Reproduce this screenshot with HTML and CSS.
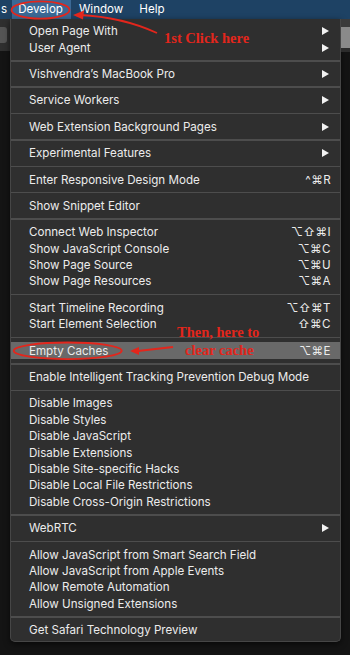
FILE: index.html
```html
<!DOCTYPE html>
<html lang="en">
<head>
  <meta charset="UTF-8">
  <meta name="viewport" content="width=device-width, initial-scale=1.0">
  <title>Develop menu</title>
  <link rel="stylesheet" href="styles.css">
</head>
<body>
  <header class="menubar">
    <span class="mb-item cut">s</span>
    <span class="mb-item active">Develop</span>
    <span class="mb-item">Window</span>
    <span class="mb-item">Help</span>
  </header>

  <div class="screen">
    <div class="side left">
      <div class="toolbar"><div class="tool-btn"></div></div>
    </div>

    <div class="menu">
      <div class="item"><span>Open Page With</span><i class="arrow"></i></div>
      <div class="item"><span>User Agent</span><i class="arrow"></i></div>
      <div class="sep"></div>
      <div class="item"><span>Vishvendra’s MacBook Pro</span><i class="arrow"></i></div>
      <div class="sep"></div>
      <div class="item"><span>Service Workers</span><i class="arrow"></i></div>
      <div class="sep"></div>
      <div class="item"><span>Web Extension Background Pages</span><i class="arrow"></i></div>
      <div class="sep"></div>
      <div class="item"><span>Experimental Features</span><i class="arrow"></i></div>
      <div class="sep"></div>
      <div class="item"><span>Enter Responsive Design Mode</span><span class="key">^⌘R</span></div>
      <div class="sep"></div>
      <div class="item"><span>Show Snippet Editor</span></div>
      <div class="sep"></div>
      <div class="item"><span>Connect Web Inspector</span><span class="key">⌥⇧⌘I</span></div>
      <div class="item"><span>Show JavaScript Console</span><span class="key">⌥⌘C</span></div>
      <div class="item"><span>Show Page Source</span><span class="key">⌥⌘U</span></div>
      <div class="item"><span>Show Page Resources</span><span class="key">⌥⌘A</span></div>
      <div class="sep"></div>
      <div class="item"><span>Start Timeline Recording</span><span class="key">⌥⇧⌘T</span></div>
      <div class="item"><span>Start Element Selection</span><span class="key">⇧⌘C</span></div>
      <div class="sep"></div>
      <div class="item selected"><span>Empty Caches</span><span class="key">⌥⌘E</span></div>
      <div class="sep"></div>
      <div class="item"><span>Enable Intelligent Tracking Prevention Debug Mode</span></div>
      <div class="sep"></div>
      <div class="item"><span>Disable Images</span></div>
      <div class="item"><span>Disable Styles</span></div>
      <div class="item"><span>Disable JavaScript</span></div>
      <div class="item"><span>Disable Extensions</span></div>
      <div class="item"><span>Disable Site-specific Hacks</span></div>
      <div class="item"><span>Disable Local File Restrictions</span></div>
      <div class="item"><span>Disable Cross-Origin Restrictions</span></div>
      <div class="sep"></div>
      <div class="item"><span>WebRTC</span><i class="arrow"></i></div>
      <div class="sep"></div>
      <div class="item"><span>Allow JavaScript from Smart Search Field</span></div>
      <div class="item"><span>Allow JavaScript from Apple Events</span></div>
      <div class="item"><span>Allow Remote Automation</span></div>
      <div class="item"><span>Allow Unsigned Extensions</span></div>
      <div class="sep"></div>
      <div class="item"><span>Get Safari Technology Preview</span></div>
    </div>

    <div class="side right">
      <div class="scroll-top"></div>
      <div class="scroll-thumb"></div>
      <div class="scroll-end"></div>
    </div>
  </div>

  <!-- hand drawn notes on top of the screenshot -->
  <svg class="notes" width="350" height="655" viewBox="0 0 350 655">
    <ellipse cx="40.5" cy="10" rx="29" ry="8.6" />
    <path d="M157 33 Q122 17 80 15" />
    <polygon class="head" points="73,15 84,10.5 83,19.5" />
    <text x="164" y="43">1st Click here</text>

    <ellipse cx="67.7" cy="350.8" rx="54" ry="8.3" />
    <path d="M173 347 Q156 349 138 351" />
    <polygon class="head" points="130,351 139,347 139,355" />
    <text x="177" y="337">Then, here to</text>
    <text x="185" y="355">clear cache</text>
  </svg>
</body>
</html>
```

FILE: styles.css
```css
body {
  margin: 0;
  width: 350px;
  height: 655px;
  overflow: hidden;
  position: relative;
  background-color: #141414;
  font-family: Inter, "Noto Sans", "DejaVu Sans", sans-serif;
  font-size: 11.6px;
  color: #ececec;
}
.menubar {
  height: 19px;
  display: flex;
  align-items: stretch;
  background-color: #1e4264;
  color: #fff;
  line-height: 19px;
  white-space: nowrap;
}
.mb-item {
  padding: 0 8px;
}
.mb-item.cut {
  padding: 0 0 0 1px;
  margin-right: 5px;
}
.mb-item.active {
  padding: 0 8px 0 6px;
  background-color: #3b6995;
}
.screen {
  display: flex;
  align-items: flex-start;
}
.side {
  align-self: stretch;
  display: flex;
  flex-direction: column;
}
.side.left {
  width: 10px;
}
.toolbar {
  height: 32px;
  background-color: #2f2f2f;
  padding-top: 8px;
  box-sizing: border-box;
}
.tool-btn {
  width: 7px;
  height: 16px;
  border-radius: 0 3px 3px 0;
  background-color: #555;
}
.side.right {
  width: 9px;
}
.scroll-top {
  height: 8px;
  background-color: #3b3b3b;
}
.scroll-thumb {
  height: 21px;
  background-color: #8a8a8a;
}
.scroll-end {
  height: 4px;
  background-color: #2c2c2c;
}
.menu {
  flex: 1;
  padding: 4px 0 3px;
  background-color: #2f2f2f;
  border: 1px solid #464646;
  border-top: none;
  border-radius: 0 0 5px 5px;
  box-shadow: 0 2px 6px rgba(0, 0, 0, 0.6);
}
.item {
  height: 16.4px;
  display: flex;
  align-items: center;
  justify-content: space-between;
  padding: 0 9px 0 18px;
  white-space: nowrap;
}
.item.selected {
  background-color: #696969;
}
.key {
  letter-spacing: 0.4px;
}
.arrow {
  width: 0;
  height: 0;
  margin-right: 2px;
  border-left: 7px solid #f2f2f2;
  border-top: 4px solid transparent;
  border-bottom: 4px solid transparent;
}
.sep {
  height: 10px;
  display: flex;
  align-items: center;
}
.sep::before {
  content: "";
  flex: 1;
  height: 1.5px;
  background-color: #4d4d4d;
}
.notes {
  position: absolute;
  top: 0;
  left: 0;
  pointer-events: none;
}
.notes ellipse,
.notes path {
  fill: none;
  stroke: #e3261c;
  stroke-width: 1.8;
}
.notes .head {
  fill: #e3261c;
}
.notes text {
  fill: #e3261c;
  font-family: "Liberation Serif", serif;
  font-weight: bold;
  font-size: 14.5px;
}
```
